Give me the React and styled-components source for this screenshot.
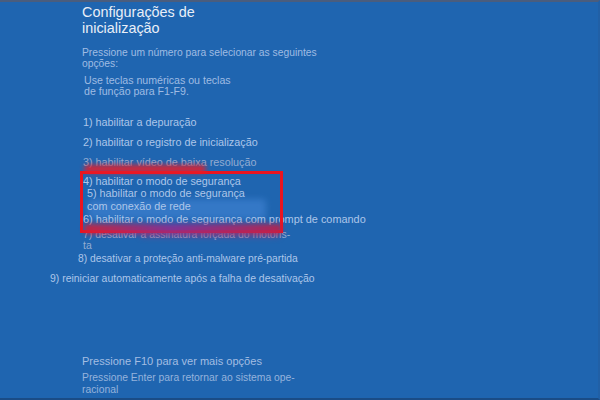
import React from 'react';
import styled, { createGlobalStyle } from 'styled-components';

const GlobalStyle = createGlobalStyle`
  html, body {
    margin: 0;
    padding: 0;
    background: #1f65b0;
  }
  * {
    box-sizing: border-box;
  }
`;

const Screen = styled.div`
  position: relative;
  z-index: 0;
  width: 600px;
  height: 400px;
  overflow: hidden;
  display: flex;
  flex-direction: column;
  align-items: flex-start;
  padding: 2px 0 0 82px;
  background: #1f65b0;
  border-top: 2px solid #4a5d7e;
  border-bottom: 2px solid #1a4c86;
  border-right: 2px solid #2160a6;
  font-family: "Liberation Sans", Arial, sans-serif;
`;

const Title = styled.h1`
  margin: 0;
  font-size: 14.4px;
  font-weight: normal;
  line-height: 16px;
  color: #e9eff8;
`;

const Text = styled.div`
  margin-top: ${p => p.$top || 0}px;
  margin-left: ${p => p.$indent || 0}px;
  font-size: ${p => p.$size || 10.3}px;
  line-height: ${p => p.$lh || 11}px;
  color: ${p => p.$color || '#9fbce3'};
  white-space: nowrap;
`;

const Item = styled.div`
  margin-top: ${p => p.$top || 0}px;
  margin-left: ${p => p.$indent || 1}px;
  font-size: ${p => p.$size || 10.8}px;
  line-height: ${p => p.$lh || 12}px;
  color: ${p => p.$dim ? '#93acd2' : '#adc6e9'};
  white-space: nowrap;
`;

const Highlight = styled.div`
  position: absolute;
  left: 80px;
  top: 169px;
  width: 203px;
  height: 62px;
  border: 3px solid #ea1420;
`;

const Smudge = styled.div`
  position: absolute;
  left: ${p => p.$x}px;
  top: ${p => p.$y}px;
  width: ${p => p.$w}px;
  height: ${p => p.$h}px;
  background: ${p => p.$bg};
  opacity: ${p => p.$o || 1};
  filter: blur(${p => p.$blur || 2}px);
  z-index: ${p => p.$z || 1};
  border-radius: 4px;
`;

export default function App() {
  return (
    <>
      <GlobalStyle />
      <Screen>
        <Title>
          Configurações de
          <br />
          inicialização
        </Title>

        <Text $top={10.5}>
          Pressione um número para selecionar as seguintes
          <br />
          opções:
        </Text>
        <Text $top={6.5} $indent={2} $size={10.6}>
          Use teclas numéricas ou teclas
          <br />
          de função para F1-F9.
        </Text>

        <Item $top={19}>1) habilitar a depuração</Item>
        <Item $top={8}>2) habilitar o registro de inicialização</Item>
        <Item $top={8} $dim>3) habilitar vídeo de baixa resolução</Item>
        <Item $top={7}>4) habilitar o modo de segurança</Item>
        <Item $indent={5} $lh={13}>
          5) habilitar o modo de segurança
          <br />
          com conexão de rede
        </Item>
        <Item $size={10.9}>6) habilitar o modo de segurança com prompt de comando</Item>
        <Item $top={5} $lh={10.5} $size={10.45} $dim>
          7) desativar a assinatura forçada do motoris-
          <br />
          ta
        </Item>
        <Item $top={2} $indent={-4} $size={10.3}>8) desativar a proteção anti-malware pré-partida</Item>
        <Item $top={8} $indent={-32} $size={10.45}>9) reiniciar automaticamente após a falha de desativação</Item>

        <Text $top={69.5} $size={11.05} $lh={13} $color="#a3bde2">
          Pressione F10 para ver mais opções
        </Text>
        <Text $top={4.5} $size={10.35} $lh={11.5} $color="#95b3dc">
          Pressione Enter para retornar ao sistema ope-
          <br />
          racional
        </Text>

        <Smudge $x={88} $y={197} $w={178} $h={20} $bg="#3a7dcc" $o={0.8} $blur={3} $z={-1} />
        <Smudge $x={84} $y={163} $w={122} $h={8} $bg="#e81e2a" $o={0.9} $blur={2.5} />
        <Smudge $x={84} $y={222} $w={198} $h={10} $bg="linear-gradient(90deg, #d81e34, #8a2e96 45%, #c41e44)" $o={0.9} $blur={2.5} />
        <Smudge $x={140} $y={229} $w={140} $h={6} $bg="#a03070" $o={0.5} $blur={3} />
        <Highlight />
      </Screen>
    </>
  );
}
